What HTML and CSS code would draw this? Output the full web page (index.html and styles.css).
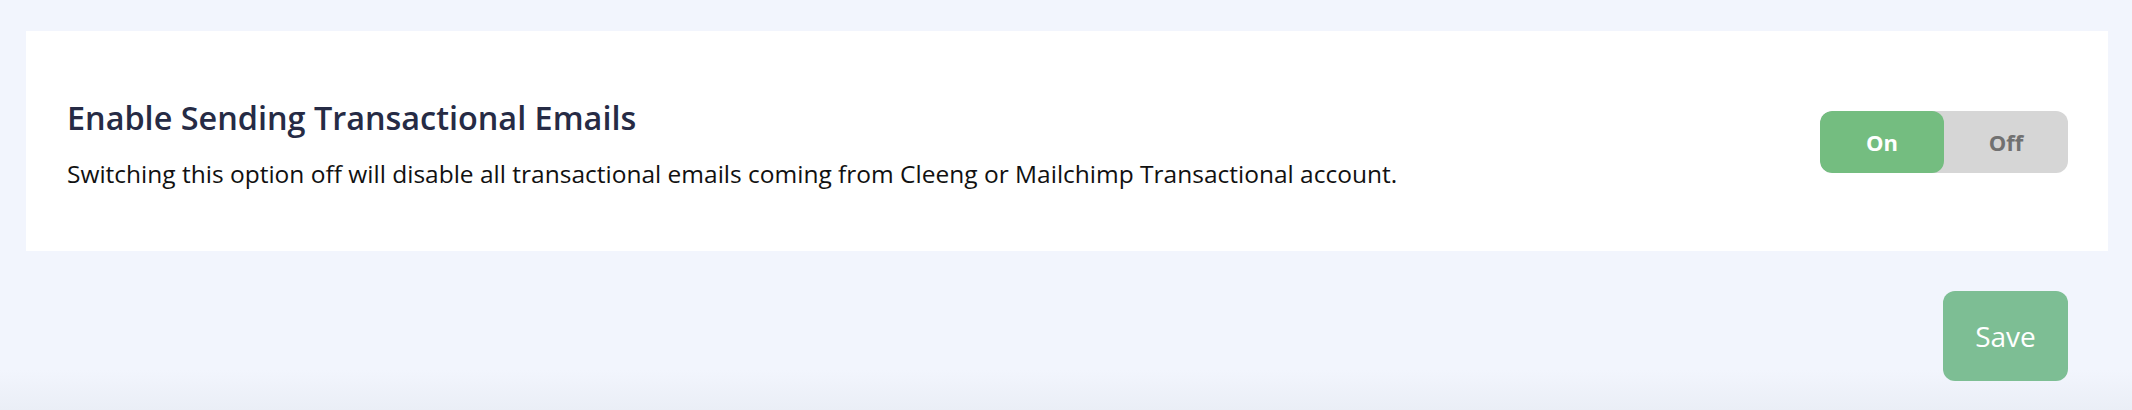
FILE: index.html
```html
<!DOCTYPE html>
<html>
<head>
    <title>Transactional Emails</title>
    <link rel="stylesheet" href="styles.css">
</head>
<body>
    <div id="settings">
        <div class="card">
            <div class="card-text">
                <h2 class="card-title">Enable Sending Transactional Emails</h2>
                <p class="card-desc">Switching this option off will disable all transactional emails coming from Cleeng or Mailchimp Transactional account.</p>
            </div>
            <div class="toggle">
                <button class="toggle-btn active">On</button>
                <button class="toggle-btn">Off</button>
            </div>
        </div>
        <div class="actions">
            <button class="save-btn">Save</button>
        </div>
    </div>
</body>
</html>
```

FILE: styles.css
```css
html {
    height: 100%;
}

body {
    margin: 0;
    min-height: 100%;
    padding: 31px 24px 0 26px;
    box-sizing: border-box;
    background: linear-gradient(to bottom, #f2f5fd 0, #f2f5fd 370px, #eaeef6 410px);
    font-family: "Open Sans", sans-serif;
}

.card {
    display: flex;
    align-items: center;
    justify-content: space-between;
    height: 220px;
    box-sizing: border-box;
    padding: 2px 40px 0 41px;
    background-color: #fff;
}

.card-title {
    margin: 0;
    font-size: 32.4px;
    line-height: 44px;
    font-weight: 600;
    color: #262b45;
}

.card-desc {
    margin: 19px 0 0;
    font-size: 24.5px;
    line-height: 32px;
    color: #111;
}

.toggle {
    display: flex;
    width: 248px;
    height: 62px;
    border-radius: 12px;
    background-color: #d6d6d6;
    overflow: hidden;
}

.toggle-btn {
    flex: 1;
    padding: 0;
    border: none;
    border-radius: 12px;
    background: none;
    font-family: "Open Sans", sans-serif;
    font-size: 22px;
    font-weight: bold;
    color: #717171;
    cursor: pointer;
}

.toggle-btn.active {
    background-color: #74bd80;
    color: #fff;
}

.actions {
    display: flex;
    justify-content: flex-end;
    padding: 40px 40px 0 0;
}

.save-btn {
    width: 125px;
    height: 90px;
    border: none;
    border-radius: 12px;
    background-color: #7dbe94;
    font-family: "Open Sans", sans-serif;
    font-size: 28px;
    color: #fff;
    cursor: pointer;
}
```
